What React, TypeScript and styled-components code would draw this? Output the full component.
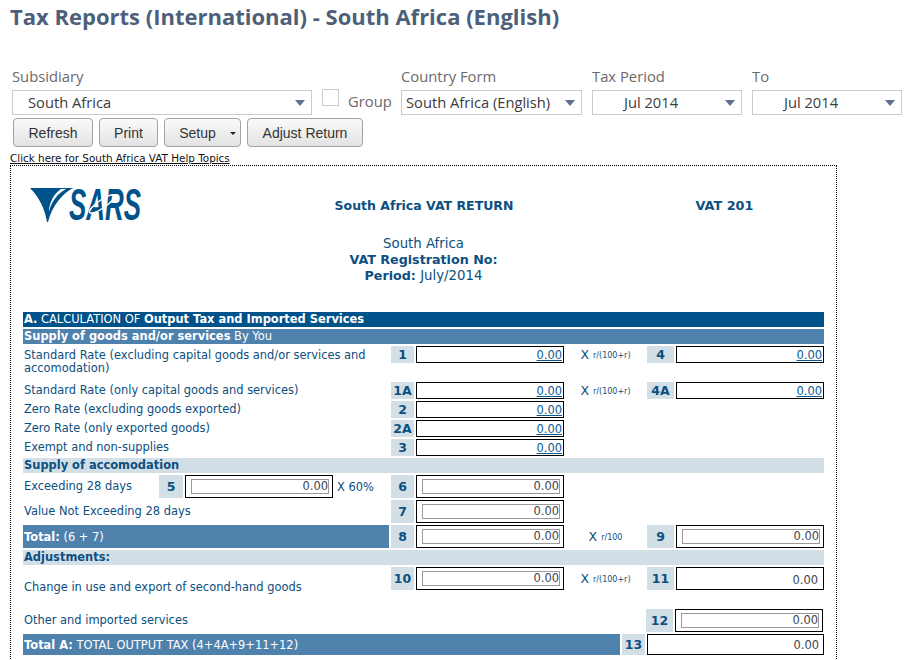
import React from "react";
import styled, { createGlobalStyle } from "styled-components";

const GlobalStyle = createGlobalStyle`
  html, body {
    margin: 0;
    padding: 0;
    height: 660px;
    overflow: hidden;
    background: #fff;
  }
`;

const SarsLogo = function () {
  return (
    <LogoSvg viewBox="0 0 112 36" width="112" height="36">
      <path d="M0 1 L43 1 C32 7 22 19 18 35 L17 35 C15 22 9 10 0 1 Z" fill="#00528a" />
      <path d="M36 2 C27 7 21 15 19 25 C19 15 24 7 31 2 Z" fill="#fff" />
      <text x="39" y="33" fill="#00528a" fontFamily="'Liberation Sans', sans-serif" fontStyle="italic" fontWeight="700" fontSize="44" textLength="72" lengthAdjust="spacingAndGlyphs">
        SARS
      </text>
      <ellipse cx="72" cy="17" rx="15" ry="4" transform="rotate(-35 72 17)" fill="none" stroke="#fff" strokeWidth="1.4" />
    </LogoSvg>
  );
};

const Select = function (props: { value: string; width: number; indent: number }) {
  return (
    <SelectBox $width={props.width} $indent={props.indent}>
      {props.value}
      <Arrow />
    </SelectBox>
  );
};

const Box = function (props: { children?: React.ReactNode; $link?: boolean; inner?: boolean; width?: number }) {
  return (
    <FieldOuter $width={props.width ?? 148} $inner={!!props.inner}>
      {props.inner ? <FieldInner>{props.children}</FieldInner> : props.$link ? <ValueLink>{props.children}</ValueLink> : <Plain>{props.children}</Plain>}
    </FieldOuter>
  );
};

const Rate = function (props: { small: string }) {
  return (
    <RateCell>
      X <small>{props.small}</small>
    </RateCell>
  );
};

export default function App() {
  return (
    <>
      <GlobalStyle />
      <Page>
        <Title>Tax Reports (International) - South Africa (English)</Title>
        <Filters>
          <FilterField>
            <FilterLabel>Subsidiary</FilterLabel>
            <Select value="South Africa" width={300} indent={15} />
          </FilterField>
          <GroupField>
            <Check />
            <GroupLabel>Group</GroupLabel>
          </GroupField>
          <FilterField>
            <FilterLabel>Country Form</FilterLabel>
            <Select value="South Africa (English)" width={181} indent={4} />
          </FilterField>
          <FilterField>
            <FilterLabel>Tax Period</FilterLabel>
            <Select value="Jul 2014" width={150} indent={31} />
          </FilterField>
          <FilterField>
            <FilterLabel>To</FilterLabel>
            <Select value="Jul 2014" width={150} indent={31} />
          </FilterField>
        </Filters>
        <Buttons>
          <Button $width={80}>Refresh</Button>
          <Button $width={59}>Print</Button>
          <SetupButton $width={77}>
            <span>Setup</span>
            <Caret />
          </SetupButton>
          <Button $width={116}>Adjust Return</Button>
        </Buttons>
        <HelpLink href="#">Click here for South Africa VAT Help Topics</HelpLink>
        <Report>
          <ReportHead>
            <SarsLogo />
            <ReportTitle>South Africa VAT RETURN</ReportTitle>
            <ReportCode>VAT 201</ReportCode>
          </ReportHead>
          <ReportInfo>
            <div>South Africa</div>
            <div><b>VAT Registration No:</b></div>
            <div><b>Period:</b> July/2014</div>
          </ReportInfo>
          <FormTable>
            <Band $tone="dark" $height={15}><b>A.</b> CALCULATION OF <b>Output Tax and Imported Services</b></Band>
            <Band $tone="mid" $height={15}><b>Supply of goods and/or services</b> By You</Band>

            <Row $height={34}>
              <LabelCell $width={366} $top>Standard Rate (excluding capital goods and/or services and accomodation)</LabelCell>
              <Num $short={17}>1</Num>
              <ShortField $height={17}><Box $link>0.00</Box></ShortField>
              <ShortField $height={17}><Rate small="r/(100+r)" /></ShortField>
              <Num $wide $short={17}>4</Num>
              <ShortField $height={17}><Box $link>0.00</Box></ShortField>
            </Row>
            <Row $height={17}>
              <LabelCell $width={366}>Standard Rate (only capital goods and services)</LabelCell>
              <Num>1A</Num>
              <Box $link>0.00</Box>
              <Rate small="r/(100+r)" />
              <Num $wide>4A</Num>
              <Box $link>0.00</Box>
            </Row>
            <Row $height={17}>
              <LabelCell $width={366}>Zero Rate (excluding goods exported)</LabelCell>
              <Num>2</Num>
              <Box $link>0.00</Box>
            </Row>
            <Row $height={17}>
              <LabelCell $width={366}>Zero Rate (only exported goods)</LabelCell>
              <Num>2A</Num>
              <Box $link>0.00</Box>
            </Row>
            <Row $height={17}>
              <LabelCell $width={366}>Exempt and non-supplies</LabelCell>
              <Num>3</Num>
              <Box $link>0.00</Box>
            </Row>

            <Band $tone="light" $height={15}><b>Supply of accomodation</b></Band>

            <Row $height={23}>
              <LabelCell $width={134}>Exceeding 28 days</LabelCell>
              <Num $mid>5</Num>
              <Box inner>0.00</Box>
              <PercentCell>X 60%</PercentCell>
              <Num>6</Num>
              <Box inner>0.00</Box>
            </Row>
            <Row $height={23}>
              <LabelCell $width={366}>Value Not Exceeding 28 days</LabelCell>
              <Num>7</Num>
              <Box inner>0.00</Box>
            </Row>
            <Row $height={23}>
              <TotalCell $width={366}><span><b>Total:</b> (6 + 7)</span></TotalCell>
              <Num>8</Num>
              <Box inner>0.00</Box>
              <Rate small="r/100" />
              <Num $wide>9</Num>
              <Box inner>0.00</Box>
            </Row>

            <Band $tone="light" $height={15}><b>Adjustments:</b></Band>

            <Row $height={40}>
              <LabelCell $width={366}>Change in use and export of second-hand goods</LabelCell>
              <Num $short={23}>10</Num>
              <ShortField $height={23}><Box inner>0.00</Box></ShortField>
              <ShortField $height={23}><Rate small="r/(100+r)" /></ShortField>
              <Num $wide $short={23}>11</Num>
              <ShortField $height={23}><Box><PlainLow>0.00</PlainLow></Box></ShortField>
            </Row>
            <Row $height={23}>
              <LabelCell $width={621}>Other and imported services</LabelCell>
              <Num $wide>12</Num>
              <Box inner>0.00</Box>
            </Row>
            <Row $height={21}>
              <TotalCell $width={597}><span><b>Total A:</b> TOTAL OUTPUT TAX (4+4A+9+11+12)</span></TotalCell>
              <Num>13</Num>
              <Box width={177}>0.00</Box>
            </Row>
          </FormTable>
        </Report>
      </Page>
    </>
  );
}

const Page = styled.div`
  width: 916px;
  height: 660px;
  overflow: hidden;
  font-family: "DejaVu Sans", Verdana, sans-serif;
`;

const Title = styled.h1`
  margin: 0;
  padding: 2px 0 0 10px;
  height: 66px;
  box-sizing: border-box;
  font: 700 22px/28px "Open Sans", sans-serif;
  color: #4d5f79;
`;

const Filters = styled.div`
  display: flex;
  gap: 10px;
  padding-left: 12px;
  height: 49px;
`;

const FilterField = styled.div`
  display: flex;
  flex-direction: column;
`;

const FilterLabel = styled.label`
  height: 24px;
  font: 14.8px/20px "Open Sans", sans-serif;
  color: #6b6b6b;
`;

const SelectBox = styled.div<{ $width: number; $indent: number }>`
  position: relative;
  width: ${(p) => p.$width}px;
  height: 25px;
  box-sizing: border-box;
  padding-left: ${(p) => p.$indent}px;
  border: 1px solid #cccccc;
  font: 14.7px/23px "Open Sans", sans-serif;
  color: #3c3c3c;
`;

const Arrow = styled.span`
  position: absolute;
  right: 6px;
  top: 9px;
  border-left: 5px solid transparent;
  border-right: 5px solid transparent;
  border-top: 6px solid #5f6f92;
`;

const GroupField = styled.div`
  display: flex;
  align-items: flex-start;
  gap: 9px;
  width: 69px;
  padding-top: 23px;
`;

const Check = styled.span`
  width: 17px;
  height: 17px;
  flex: none;
  box-sizing: border-box;
  border: 1px solid #cccccc;
`;

const GroupLabel = styled.span`
  font: 14.8px/24px "Open Sans", sans-serif;
  color: #6b6b6b;
`;

const Buttons = styled.div`
  display: flex;
  gap: 6px;
  padding: 3px 0 0 13px;
`;

const Button = styled.button<{ $width: number }>`
  display: flex;
  align-items: center;
  justify-content: center;
  width: ${(p) => p.$width}px;
  height: 29px;
  padding: 0;
  border: 1px solid #a3a3a3;
  border-radius: 4px;
  background: linear-gradient(#fafafa, #e3e3e3);
  font: 14px "Liberation Sans", Arial, sans-serif;
  color: #333;
`;

const SetupButton = styled(Button)`
  gap: 14px;
  padding-left: 10px;
`;

const Caret = styled.i`
  margin-top: 1px;
  border-left: 3px solid transparent;
  border-right: 3px solid transparent;
  border-top: 3px solid #222;
`;

const HelpLink = styled.a`
  display: block;
  width: fit-content;
  margin: 4px 0 0 10px;
  font-size: 10.4px;
  line-height: 14px;
  color: #111;
`;

const Report = styled.div`
  width: 827px;
  height: 560px;
  box-sizing: border-box;
  margin-left: 10px;
  padding: 0 12px;
  border: 1px dotted #000;
`;

const ReportHead = styled.div`
  display: grid;
  grid-template-columns: 200px 402px 199px;
  align-items: center;
  height: 70px;
  box-sizing: border-box;
  padding-top: 8px;
`;

const LogoSvg = styled.svg`
  display: block;
  margin-left: 7px;
  overflow: visible;
`;

const ReportTitle = styled.div`
  text-align: center;
  font-size: 12.5px;
  font-weight: 700;
  color: #0c4f80;
`;

const ReportCode = styled(ReportTitle)`
  font-size: 12.8px;
`;

const ReportInfo = styled.div`
  height: 76px;
  text-align: center;
  font-size: 13.3px;
  line-height: 16px;
  color: #0c4f80;

  b {
    font-size: 12.7px;
  }
`;

const FormTable = styled.div`
  display: flex;
  flex-direction: column;
  gap: 2px;
  width: 801px;
  font-size: 11.45px;
  color: #0c4f80;
`;

const Band = styled.div<{ $tone: "dark" | "mid" | "light"; $height: number }>`
  height: ${(p) => p.$height}px;
  padding-left: 1px;
  line-height: ${(p) => p.$height}px;
  white-space: nowrap;
  background: ${(p) => (p.$tone === "dark" ? "#00528a" : p.$tone === "mid" ? "#4f81ad" : "#d3dfe7")};
  color: ${(p) => (p.$tone === "light" ? "#0c4f80" : "#fff")};
`;

const Row = styled.div<{ $height: number }>`
  display: flex;
  gap: 2px;
  height: ${(p) => p.$height}px;
`;

const LabelCell = styled.div<{ $width: number; $top?: boolean }>`
  display: flex;
  align-items: ${(p) => (p.$top ? "flex-start" : "center")};
  width: ${(p) => p.$width}px;
  flex: none;
  box-sizing: border-box;
  padding: ${(p) => (p.$top ? "3px" : "0")} 20px 0 1px;
  line-height: 13px;
`;

const TotalCell = styled.div<{ $width: number }>`
  display: flex;
  align-items: center;
  width: ${(p) => p.$width}px;
  flex: none;
  padding-left: 1px;
  box-sizing: border-box;
  background: #4f81ad;
  color: #fff;
`;

const Num = styled.div<{ $wide?: boolean; $mid?: boolean; $short?: number }>`
  display: flex;
  align-items: center;
  justify-content: center;
  flex: none;
  width: ${(p) => (p.$wide ? 27 : p.$mid ? 24 : 23)}px;
  height: ${(p) => (p.$short ? `${p.$short}px` : "auto")};
  background: #d3dfe7;
  font-weight: 700;
  font-size: 12.5px;
  color: #0c4f80;
`;

const ShortField = styled.div<{ $height: number }>`
  height: ${(p) => p.$height}px;
  display: flex;
`;

const FieldOuter = styled.div<{ $width: number; $inner: boolean }>`
  display: flex;
  align-items: center;
  justify-content: flex-end;
  flex: none;
  width: ${(p) => p.$width}px;
  box-sizing: border-box;
  padding: ${(p) => (p.$inner ? "3px 3px 3px 5px" : "0 1px 0 0")};
  border: 1px solid #000;
  background: #fff;
  color: #40464f;
`;

const FieldInner = styled.div`
  flex: 1;
  height: 15px;
  box-sizing: border-box;
  border: 1px solid #9a9a9a;
  text-align: right;
  line-height: 13px;
  color: #40464f;
`;

const ValueLink = styled.a`
  color: #0c5a96;
  text-decoration: underline;
`;

const Plain = styled.span`
  padding-right: 3px;
`;

const PlainLow = styled.span`
  position: relative;
  top: 1px;
  right: 1px;
`;

const RateCell = styled.div`
  display: flex;
  align-items: center;
  justify-content: center;
  gap: 4px;
  width: 79px;
  flex: none;
  font-size: 12.5px;

  small {
    font-size: 8px;
    position: relative;
    top: 1px;
  }
`;

const PercentCell = styled.div`
  display: flex;
  align-items: center;
  width: 54px;
  flex: none;
  padding-left: 2px;
  box-sizing: border-box;
`;
